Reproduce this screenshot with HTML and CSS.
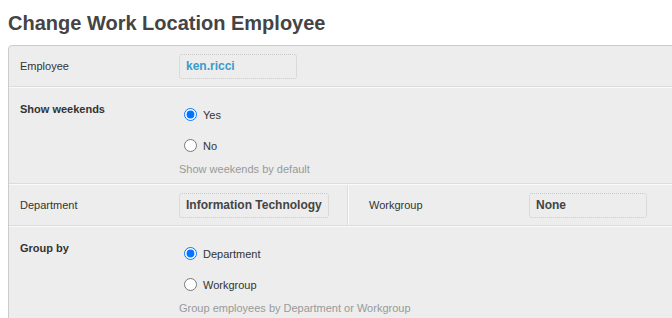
FILE: index.html
```html
<!DOCTYPE html>
<html lang="en">
<head>
    <meta charset="UTF-8">
    <meta name="viewport" content="width=device-width, initial-scale=1.0">
    <title>Change Work Location Employee</title>
    <link rel="stylesheet" href="styles.css">
</head>
<body>

    <h1>Change Work Location Employee</h1>

    <div class="panel">
        <div class="row single">
            <div class="label">Employee</div>
            <div class="value"><span class="field link">ken.ricci</span></div>
        </div>

        <div class="row">
            <div class="label strong">Show weekends</div>
            <div class="value options">
                <label class="option"><input type="radio" name="weekends" checked>Yes</label>
                <label class="option"><input type="radio" name="weekends">No</label>
                <div class="hint">Show weekends by default</div>
            </div>
        </div>

        <div class="row split">
            <div class="half">
                <div class="label">Department</div>
                <div class="value"><span class="field">Information Technology</span></div>
            </div>
            <div class="half second">
                <div class="label">Workgroup</div>
                <div class="value"><span class="field">None</span></div>
            </div>
        </div>

        <div class="row">
            <div class="label strong">Group by</div>
            <div class="value options">
                <label class="option"><input type="radio" name="groupby" checked>Department</label>
                <label class="option"><input type="radio" name="groupby">Workgroup</label>
                <div class="hint">Group employees by Department or Workgroup</div>
            </div>
        </div>
    </div>

</body>
</html>
```

FILE: styles.css
```css
body {
    font-family: "Liberation Sans", Arial, sans-serif;
    margin: 8px 0 0 8px;
    background-color: #fff;
    color: #333;
    overflow: hidden;
}

h1 {
    font-size: 20px;
    line-height: 24px;
    color: #444;
    margin: 3px 0 10px;
}

.panel {
    background-color: #ededed;
    border: 1px solid #ccc;
    border-radius: 4px 4px 0 0;
    margin-right: -20px;
}

.row {
    display: grid;
    grid-template-columns: 170px 1fr;
    border-bottom: 1px solid #dcdcdc;
}

.row + .row {
    border-top: 1px solid #fafafa;
}

.label {
    font-size: 11px;
    line-height: 14px;
    padding: 14px 11px;
}

.strong {
    font-weight: bold;
}

.single,
.half {
    min-height: 40px;
    align-items: center;
}

.single .label,
.half .label {
    padding: 0 11px;
}

.field {
    display: inline-block;
    box-sizing: border-box;
    min-width: 118px;
    height: 25px;
    line-height: 23px;
    padding: 0 6px;
    border: 1px dotted #c8c8c8;
    border-radius: 3px;
    font-size: 12px;
    font-weight: bold;
    color: #444;
}

.link {
    color: #3b9bcb;
}

.options {
    padding: 11px 0 7px;
}

.option {
    display: flex;
    align-items: center;
    height: 31px;
    font-size: 11px;
}

.option input {
    width: 13px;
    height: 13px;
    margin: 0 6px 0 5px;
}

.hint {
    font-size: 11px;
    line-height: 13px;
    margin-top: 2px;
    color: #999;
}

.split {
    grid-template-columns: 339px 1fr;
}

.half {
    display: grid;
    grid-template-columns: 170px 1fr;
}

.half:first-child {
    border-right: 1px solid #dcdcdc;
}

.second {
    border-left: 1px solid #fafafa;
    grid-template-columns: 180px 1fr;
}

.second .label {
    padding-left: 20px;
}
```
